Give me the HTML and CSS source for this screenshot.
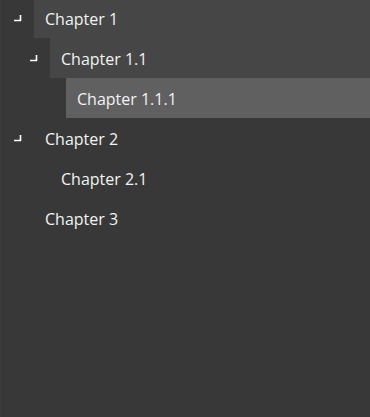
FILE: index.html
```html
<!DOCTYPE html>
<html>
<head>
<meta charset="utf-8">
<link rel="stylesheet" href="styles.css">
</head>
<body>
<div class="tree">
  <div class="row">
    <span class="expander"><svg width="8" height="7" viewBox="0 0 8 7"><path d="M0 5.5H6.5V0" fill="none" stroke="#fff" stroke-width="1.6"/></svg></span>
    <span class="label hover">Chapter 1</span>
  </div>
  <div class="row lvl1">
    <span class="expander"><svg width="8" height="7" viewBox="0 0 8 7"><path d="M0 5.5H6.5V0" fill="none" stroke="#fff" stroke-width="1.6"/></svg></span>
    <span class="label hover">Chapter 1.1</span>
  </div>
  <div class="row lvl2">
    <span class="expander"></span>
    <span class="label selected">Chapter 1.1.1</span>
  </div>
  <div class="row">
    <span class="expander"><svg width="8" height="7" viewBox="0 0 8 7"><path d="M0 5.5H6.5V0" fill="none" stroke="#fff" stroke-width="1.6"/></svg></span>
    <span class="label">Chapter 2</span>
  </div>
  <div class="row lvl1">
    <span class="expander"></span>
    <span class="label">Chapter 2.1</span>
  </div>
  <div class="row">
    <span class="expander"></span>
    <span class="label">Chapter 3</span>
  </div>
</div>
</body>
</html>
```

FILE: styles.css
```css
html, body {
  margin: 0;
  height: 100%;
  background: #383838;
}
body {
  font-family: "Open Sans", "Noto Sans", sans-serif;
  font-size: 16px;
  color: #f2f2f2;
  overflow: hidden;
  border-left: 1px solid #3d3d3d;
  box-sizing: border-box;
}
.tree {
  margin-top: -2px;
  display: flex;
  flex-direction: column;
}
.row {
  display: flex;
  height: 40px;
}
.row.lvl1 { padding-left: 16px; }
.row.lvl2 { padding-left: 32px; }
.expander {
  width: 33px;
  flex: none;
  display: flex;
  align-items: center;
  justify-content: center;
}
.label {
  flex: 1;
  display: flex;
  align-items: center;
  padding-left: 11px;
  padding-top: 1px;
}
.label.hover { background: #464646; }
.label.selected { background: #606060; }
```
